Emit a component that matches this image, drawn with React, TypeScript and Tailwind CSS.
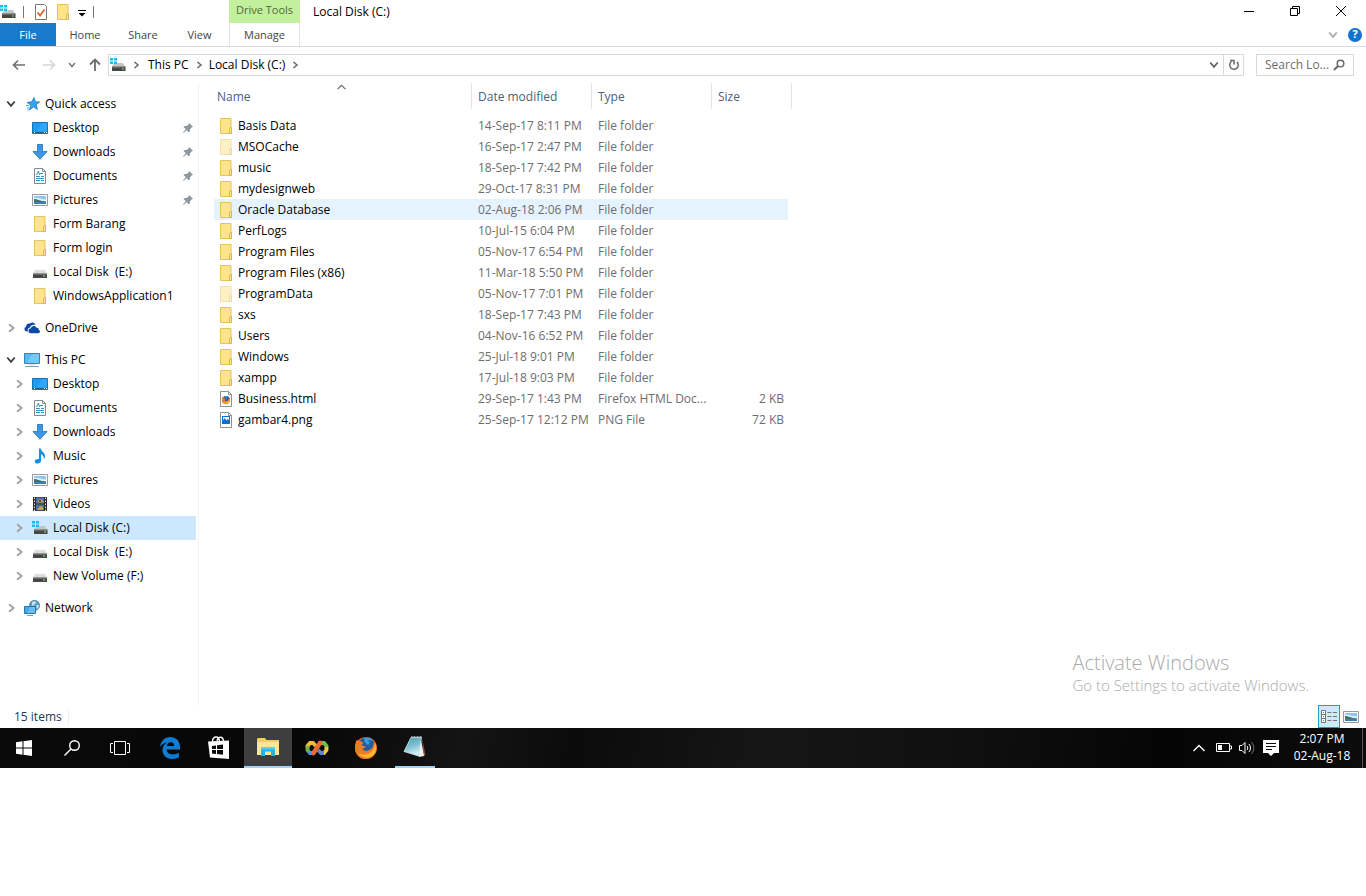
import type { ReactNode } from "react";

interface TreeItem {
  label: string;
  icon: ReactNode;
  nested?: boolean;
  pinned?: boolean;
  chevron?: "open" | "closed";
  selected?: boolean;
}

interface FileItem {
  name: string;
  date: string;
  type: string;
  size?: string;
  icon?: ReactNode;
  hovered?: boolean;
}

function FolderIcon({ faded = false }: { faded?: boolean }) {
  return (
    <svg width="16" height="16" viewBox="0 0 16 16" className={faded ? "opacity-50" : ""}>
      <path d="M2.500.5h10.500v15H2.500z" fill="#ffe48c" stroke="#e6c25a" />
      <path d="M11.500 15.500v-4.500l1-1.500h1v6z" fill="#ffe9a3" stroke="#d9b548" />
    </svg>
  );
}

function DriveIcon() {
  return (
    <svg width="16" height="16" viewBox="0 0 16 16">
      <path d="M3.500 6h9L15 9.500H1z" fill="#dcdcdc" />
      <path d="M1 9.500h14v4.500H1z" fill="#454745" />
      <path d="M1 9.500h14v1H1z" fill="#8d8f8d" />
      <path d="M11 11.500h2v1h-2z" fill="#6ff08a" />
    </svg>
  );
}

function SystemDriveIcon() {
  return (
    <svg width="16" height="16" viewBox="0 0 16 16">
      <path d="M4 6h9l2 3.500H2z" fill="#c4c6c6" />
      <path d="M2 9.500h13.500V14H2z" fill="#454745" />
      <path d="M2 9.500h13.500v1H2z" fill="#8d8f8d" />
      <path d="M12 11.500h2v1h-2z" fill="#6ff08a" />
      <path d="M0 1h3v2.500H0zM4 1h3v2.500H4zM0 4.500h3V7H0zM4 4.500h3V7H4z" fill="#1db9ea" />
    </svg>
  );
}

function DesktopIcon() {
  return (
    <svg width="16" height="16" viewBox="0 0 16 16">
      <path d="M.5 2.500h15v11H.5z" fill="#1f9df4" stroke="#1673b8" />
      <path d="M10 3h5v8L5 12z" fill="#4ab4fa" opacity=".4" />
      <path d="M1 12h14v1H1z" fill="#0d62a8" />
      <path d="M2 12h1v1H2zM12 12h1v1h-1zM14 12h1v1h-1z" fill="#fff" />
    </svg>
  );
}

function DownloadIcon() {
  return (
    <svg width="16" height="16" viewBox="0 0 16 16">
      <path d="M5.500.5h5v7h4.500L8 15.300 1 7.500h4.500z" fill="#3f95e0" stroke="#3380c8" />
    </svg>
  );
}

function DocumentIcon() {
  return (
    <svg width="16" height="16" viewBox="0 0 16 16">
      <path d="M2.500.5h8l3 3v12h-11z" fill="#fff" stroke="#85898c" />
      <path d="M10.500.5v3h3" fill="none" stroke="#85898c" />
      <path d="M4.500 7 6.500 3l1 4M8 5.500h3M4 8.500h4M9 8.500h3M4 10.500h8M4 12.500h4M9 12.500h3" fill="none" stroke="#2f94bd" />
    </svg>
  );
}

function PictureIcon() {
  return (
    <svg width="16" height="16" viewBox="0 0 16 16">
      <path d="M.5 2.500h15v11H.5z" fill="#fff" stroke="#979ba0" />
      <path d="M2 4h12v8H2z" fill="#8cc4f2" />
      <path d="M2 5.500c4 0 6 1.500 12 2v2H2z" fill="#dff0fa" />
      <path d="M2 7c3 0 6 2 12 2.500v1H2z" fill="#3f7562" />
      <path d="M2 10h12v2H2z" fill="#3a80b0" />
    </svg>
  );
}

function MusicIcon() {
  return (
    <svg width="16" height="16" viewBox="0 0 16 16">
      <path d="M7 .5h1.800c.3 3 4.200 4.200 4.200 7.500 0 1.500-.6 2.500-1.400 3.300.5-2.500-.4-4.100-2.600-5v6.500c0 1.700-1.500 2.700-3.400 2.700-1.700 0-2.900-.8-2.900-2.100 0-1.500 1.700-2.600 4.300-2.300z" fill="#0c93e4" />
    </svg>
  );
}

function VideoIcon() {
  return (
    <svg width="16" height="16" viewBox="0 0 16 16">
      <path d="M1 1h14v14H1z" fill="#2b2b2b" />
      <path d="M2.500 1.500v14M13.500 1.500v14" stroke="#e4e4e4" strokeDasharray="1.500 1.500" />
      <path d="M4 1.500h8v6H4zM4 8.500h8v6H4z" fill="#4670b6" />
      <path d="M5 6.500l2-3h3l2 3zM5 14l3-4 3 1v3z" fill="#c8a23a" />
      <path d="M7 4h2v2H7z" fill="#7c3b35" />
    </svg>
  );
}

function StarIcon() {
  return (
    <svg width="16" height="16" viewBox="0 0 16 16">
      <path d="M10 1.500l1.400 4.200 4.300.3-3.500 2.700 1.200 4.700-3.900-2.500-4 3 1.200-4.700L3 6.300l4.800-.5z" fill="#34a6ee" stroke="#1c7fc5" strokeWidth=".8" />
      <path d="M2 9.500h3M3 12h2.500M3.500 14h1.500" stroke="#4aaeee" />
    </svg>
  );
}

function OneDriveIcon() {
  return (
    <svg width="16" height="16" viewBox="0 0 16 16">
      <path d="M4 11.500H2.500A2.500 2.500 0 0 1 2 6.700C2.200 4 4 3 6 3.500c1.800-1.700 5-1 5.500 1.500-3-.8-5 .6-5.500 2.500-2 .3-2.800 2-2 4z" fill="#0c48a8" />
      <path d="M7 13.200a2.500 2.500 0 0 1 0-5c.3-2.500 4.500-3.200 5.500-.5 1.900 0 2.500 1.200 2.400 2.200 1.700.8 1.300 3.300-.6 3.300z" fill="#0c48a8" />
    </svg>
  );
}

function ComputerIcon() {
  return (
    <svg width="16" height="16" viewBox="0 0 16 16">
      <path d="M.5 1.500h15v10H.5z" fill="#58b9f0" stroke="#3c81ad" />
      <path d="M8 2h7v9H3z" fill="#8dd2f8" opacity=".6" />
      <path d="M5 12.500h6v1H5z" fill="#c7d3da" />
      <path d="M1 14.500h14" stroke="#8ea1ad" />
    </svg>
  );
}

function NetworkIcon() {
  return (
    <svg width="16" height="16" viewBox="0 0 16 16">
      <circle cx="10.500" cy="5.500" r="5" fill="#5f9fc4" stroke="#4683a8" />
      <path d="M8 2l3-1 1 2-2 2-2 1zM12.500 5l2.500 0-1 4-1.500-1z" fill="#c3e0ee" />
      <path d="M.5 6.500h11v7H.5z" fill="#3fa9ea" stroke="#2d76aa" />
      <path d="M6 7h5v6H3z" fill="#82ccf7" opacity=".6" />
      <path d="M3 15.500h6" stroke="#8299a8" />
    </svg>
  );
}

function FirefoxMark() {
  return (
    <>
      <circle cx="12" cy="12" r="11" fill="#e8661b" />
      <circle cx="12.500" cy="9.500" r="8.200" fill="#1d5fa6" />
      <path d="M10 2c4-1.500 8 0 9 3-2-1-4-1-5 0 2 1 2 3 0 4-2-1-4-3-4-7z" fill="#3f9bd9" />
      <path d="M2.500 4c.8.300 1.800.8 2.500 1.500C7 5 8 6 9.500 6.500L7.500 9c1 1 3 1 4.500 1.500-1 1.500-2.500 2-3.500 2.500 2 3 6 2 8.500 0 2-2 3-4 2.500-7.500 2 1.500 3 4 3 6.500 0 6-5 11-11 11C5 23 1 18 1 12c0-3 .5-5.500 1.500-8z" fill="#ef7c22" />
      <path d="M21 7c2.500 5 1 12-5 14-5 1.500-10-.5-12-4 5 3 12 2 15-3 1.500-2.500 2-4.500 2-7z" fill="#fbb935" />
    </>
  );
}

function HtmlFileIcon() {
  return (
    <svg width="16" height="16" viewBox="0 0 16 16">
      <path d="M2.500.5h8l3 3v12h-11z" fill="#fff" stroke="#8e9194" />
      <path d="M10.500.5v3h3" fill="none" stroke="#8e9194" />
      <svg x="3.500" y="4.500" width="9" height="9" viewBox="0 0 24 24">
        <FirefoxMark />
      </svg>
    </svg>
  );
}

function PngFileIcon() {
  return (
    <svg width="16" height="16" viewBox="0 0 16 16">
      <path d="M2.500.5h8l3 3v12h-11z" fill="#fff" stroke="#8e9194" />
      <path d="M10.500.5v3h3" fill="none" stroke="#8e9194" />
      <path d="M4 4h8v8H4z" fill="#0b71cf" />
      <path d="M5 5h6v3l-1.500-1L8.500 8.500 6.500 6 5 8.500z" fill="#fff" />
    </svg>
  );
}

function PinIcon() {
  return (
    <svg width="12" height="12" viewBox="0 0 12 12" className="ml-auto mr-[2px]">
      <path d="M7 1l4 3.800-1.200.5-1.800 1.900-.2 2.300-1 .8L4.700 8.200 1.500 11 1 10.500l2.900-3.200L1.500 5l1-1 2.300 0 1.800-1.800z" fill="#8c979f" />
    </svg>
  );
}

function Chevron({ dir, color = "#666", size = 8 }: { dir: "down" | "right" | "up"; color?: string; size?: number }) {
  const paths = {
    down: "M1 2l3 3.500L7 2",
    right: "M2.500 1L6 4 2.500 7",
    up: "M.5 5.500L4 2l3.500 3.500",
  };
  return (
    <svg width={size} height={size} viewBox="0 0 8 8" fill="none" stroke={color} strokeWidth={dir === "up" ? 1 : 1.5}>
      <path d={paths[dir]} />
    </svg>
  );
}

const groups: TreeItem[][] = [
  [
    { label: "Quick access", icon: <StarIcon />, chevron: "open" },
    { label: "Desktop", icon: <DesktopIcon />, nested: true, pinned: true },
    { label: "Downloads", icon: <DownloadIcon />, nested: true, pinned: true },
    { label: "Documents", icon: <DocumentIcon />, nested: true, pinned: true },
    { label: "Pictures", icon: <PictureIcon />, nested: true, pinned: true },
    { label: "Form Barang", icon: <FolderIcon />, nested: true },
    { label: "Form login", icon: <FolderIcon />, nested: true },
    { label: "Local Disk  (E:)", icon: <DriveIcon />, nested: true },
    { label: "WindowsApplication1", icon: <FolderIcon />, nested: true },
  ],
  [{ label: "OneDrive", icon: <OneDriveIcon />, chevron: "closed" }],
  [
    { label: "This PC", icon: <ComputerIcon />, chevron: "open" },
    { label: "Desktop", icon: <DesktopIcon />, nested: true, chevron: "closed" },
    { label: "Documents", icon: <DocumentIcon />, nested: true, chevron: "closed" },
    { label: "Downloads", icon: <DownloadIcon />, nested: true, chevron: "closed" },
    { label: "Music", icon: <MusicIcon />, nested: true, chevron: "closed" },
    { label: "Pictures", icon: <PictureIcon />, nested: true, chevron: "closed" },
    { label: "Videos", icon: <VideoIcon />, nested: true, chevron: "closed" },
    { label: "Local Disk (C:)", icon: <SystemDriveIcon />, nested: true, chevron: "closed", selected: true },
    { label: "Local Disk  (E:)", icon: <DriveIcon />, nested: true, chevron: "closed" },
    { label: "New Volume (F:)", icon: <DriveIcon />, nested: true, chevron: "closed" },
  ],
  [{ label: "Network", icon: <NetworkIcon />, chevron: "closed" }],
];

const files: FileItem[] = [
  { name: "Basis Data", date: "14-Sep-17 8:11 PM", type: "File folder" },
  { name: "MSOCache", date: "16-Sep-17 2:47 PM", type: "File folder", icon: <FolderIcon faded /> },
  { name: "music", date: "18-Sep-17 7:42 PM", type: "File folder" },
  { name: "mydesignweb", date: "29-Oct-17 8:31 PM", type: "File folder" },
  { name: "Oracle Database", date: "02-Aug-18 2:06 PM", type: "File folder", hovered: true },
  { name: "PerfLogs", date: "10-Jul-15 6:04 PM", type: "File folder" },
  { name: "Program Files", date: "05-Nov-17 6:54 PM", type: "File folder" },
  { name: "Program Files (x86)", date: "11-Mar-18 5:50 PM", type: "File folder" },
  { name: "ProgramData", date: "05-Nov-17 7:01 PM", type: "File folder", icon: <FolderIcon faded /> },
  { name: "sxs", date: "18-Sep-17 7:43 PM", type: "File folder" },
  { name: "Users", date: "04-Nov-16 6:52 PM", type: "File folder" },
  { name: "Windows", date: "25-Jul-18 9:01 PM", type: "File folder" },
  { name: "xampp", date: "17-Jul-18 9:03 PM", type: "File folder" },
  { name: "Business.html", date: "29-Sep-17 1:43 PM", type: "Firefox HTML Doc...", size: "2 KB", icon: <HtmlFileIcon /> },
  { name: "gambar4.png", date: "25-Sep-17 12:12 PM", type: "PNG File", size: "72 KB", icon: <PngFileIcon /> },
];

function TitleBar() {
  return (
    <header className="flex border-b border-[#dadbdc] text-[#444]">
      <div className="w-[229px]">
        <div className="flex h-[23px] items-center">
          <SystemDriveIcon />
          <span className="ml-[7px] h-3 w-px bg-[#777]" />
          <button className="ml-[9px]" aria-label="Properties">
            <svg width="16" height="16" viewBox="0 0 16 16" className="block">
              <path d="M2.500.5h9l2 2v13h-11z" fill="#fff" stroke="#77797c" />
              <path d="M4.500 8.500l2.500 3 4.500-6" fill="none" stroke="#e2622b" strokeWidth="1.800" />
            </svg>
          </button>
          <button className="ml-[6px]" aria-label="New folder">
            <FolderIcon />
          </button>
          <button className="ml-[7px]" aria-label="Customize toolbar">
            <svg width="8" height="8" viewBox="0 0 8 8" className="mt-[3px] block">
              <path d="M0 1.500h8" stroke="#000" />
              <path d="M.5 4h7L4 7.500z" />
            </svg>
          </button>
          <span className="ml-[7px] h-3 w-px bg-[#777]" />
        </div>
        <nav className="flex h-[23px] text-[11px]">
          <button className="w-14 bg-[#1979ca] pt-px text-white">File</button>
          <button className="w-[58px] pt-px">Home</button>
          <button className="w-[58px] pt-px">Share</button>
          <button className="w-[55px] pt-px">View</button>
        </nav>
      </div>
      <div className="w-[71px] text-[11px]">
        <div className="flex h-[23px] items-center justify-center bg-[#c2f09c] pb-[2px] text-[#4b6b3c]">Drive Tools</div>
        <button className="h-[23px] w-full border-x border-[#e4e4e4] pt-px">Manage</button>
      </div>
      <div className="flex-1">
        <div className="flex h-[23px] items-center pr-[2px] text-xs text-black">
          <h1 className="ml-[13px]">Local Disk (C:)</h1>
          <div className="ml-auto flex pb-[2px]">
            <button className="flex w-[46px] justify-center" aria-label="Minimize">
              <svg width="10" height="10" viewBox="0 0 10 10" stroke="#000">
                <path d="M0 5.500h10" />
              </svg>
            </button>
            <button className="flex w-[46px] justify-center" aria-label="Restore">
              <svg width="10" height="10" viewBox="0 0 10 10" stroke="#000" fill="none">
                <path d="M.5 2.500h7v7h-7zM2.500 2.500v-2h7v7h-2" />
              </svg>
            </button>
            <button className="flex w-[46px] justify-center" aria-label="Close">
              <svg width="10" height="10" viewBox="0 0 10 10" stroke="#000">
                <path d="M0 0l10 10M10 0L0 10" />
              </svg>
            </button>
          </div>
        </div>
        <div className="flex h-[23px] items-center justify-end gap-[10px] pr-1">
          <button aria-label="Minimize the ribbon">
            <Chevron dir="down" color="#aaa" size={10} />
          </button>
          <button className="flex size-[14px] items-center justify-center rounded-full bg-[#1073cf] text-[11px] font-bold text-white">
            ?
          </button>
        </div>
      </div>
    </header>
  );
}

function AddressBar() {
  return (
    <div className="flex h-9 items-center pr-3 pl-2">
      <button className="flex w-[22px] justify-center" aria-label="Back">
        <svg width="14" height="12" viewBox="0 0 14 12" fill="none" stroke="#6d6d6d" strokeWidth="1.600">
          <path d="M13 6H1.500M6 1.500L1.500 6 6 10.500" />
        </svg>
      </button>
      <button className="ml-2 flex w-[22px] justify-center" aria-label="Forward">
        <svg width="14" height="12" viewBox="0 0 14 12" fill="none" stroke="#d5d5d5" strokeWidth="1.600">
          <path d="M1 6h11.500M8 1.500L12.500 6 8 10.500" />
        </svg>
      </button>
      <button className="ml-1 flex w-4 justify-center" aria-label="Recent locations">
        <Chevron dir="down" color="#777" />
      </button>
      <button className="ml-1 flex w-[22px] justify-center" aria-label="Up">
        <svg width="12" height="14" viewBox="0 0 12 14" fill="none" stroke="#6d6d6d" strokeWidth="1.800">
          <path d="M6 13V1.500M1 6.500l5-5 5 5" />
        </svg>
      </button>
      <div className="ml-[2px] flex h-[22px] flex-1 items-center border border-[#d9d9d9] pl-px">
        <SystemDriveIcon />
        <span className="mx-[6px]">
          <Chevron dir="right" />
        </span>
        <a href="#this-pc" className="ml-[2px]">This PC</a>
        <span className="mx-[6px]">
          <Chevron dir="right" />
        </span>
        <a href="#local-disk-c">Local Disk (C:)</a>
        <span className="mx-[6px]">
          <Chevron dir="right" />
        </span>
        <button className="ml-auto mr-1" aria-label="Previous locations">
          <Chevron dir="down" size={10} />
        </button>
        <button className="flex h-full w-5 items-center justify-center border-l border-[#d9d9d9]" aria-label="Refresh">
          <svg width="12" height="12" viewBox="0 0 12 12" fill="none" stroke="#6a6a6a" strokeWidth="1.500">
            <path d="M9 2.900A4.300 4.300 0 1 1 3.500 2.500M2 1.500h4v4" />
          </svg>
        </button>
      </div>
      <label className="ml-3 flex h-[22px] w-[98px] items-center border border-[#d9d9d9] pr-2 pl-2">
        <input type="text" aria-label="Search Local Disk" placeholder="Search Lo..." className="w-[68px] outline-none placeholder:text-[#6d6d6d]" />
        <svg width="12" height="12" viewBox="0 0 12 12" fill="none" stroke="#6a6a6a">
          <circle cx="7.500" cy="4.500" r="3.300" strokeWidth="1.500" />
          <path d="M5 7L1 11" strokeWidth="2" />
        </svg>
      </label>
    </div>
  );
}

function TreeRow({ item }: { item: TreeItem }) {
  return (
    <li className={`flex h-6 items-center ${item.nested ? "pl-[11px]" : "pl-[3px]"} ${item.selected ? "bg-[#cce8ff]" : ""}`}>
      <span className="flex w-4 justify-center">
        {item.chevron && (
          <button aria-label={`Toggle ${item.label}`}>
            <Chevron
              dir={item.chevron === "open" ? "down" : "right"}
              color={item.chevron === "open" ? "#404040" : "#a0a0a0"}
              size={10}
            />
          </button>
        )}
      </span>
      <a href="#folder" className="ml-[5px] flex items-center gap-[5px] whitespace-pre">
        {item.icon}
        {item.label}
      </a>
      {item.pinned && <PinIcon />}
    </li>
  );
}

function Sidebar() {
  return (
    <aside className="flex w-[199px] shrink-0 flex-col gap-2 border-r border-[#f3f3f3] pt-[9px] pr-[2px]">
      {groups.map((group, i) => (
        <ul key={i}>
          {group.map((item) => (
            <TreeRow key={item.label} item={item} />
          ))}
        </ul>
      ))}
    </aside>
  );
}

function FileTable() {
  return (
    <table className="w-[574px] table-fixed text-left">
      <colgroup>
        <col className="w-[258px]" />
        <col className="w-[120px]" />
        <col className="w-[120px]" />
        <col className="w-[76px]" />
      </colgroup>
      <thead className="text-[#4c607a]">
        <tr className="h-8 align-top">
          <th className="p-0 font-normal">
            <div className="relative flex h-[26px] items-center border-r border-[#e5e5e5] pt-[2px] pl-[3px]">
              Name
              <span className="absolute top-0 left-[123px]">
                <Chevron dir="up" size={9} />
              </span>
            </div>
          </th>
          <th className="p-0 font-normal">
            <div className="flex h-[26px] items-center border-r border-[#e5e5e5] pt-[2px] pl-[6px]">Date modified</div>
          </th>
          <th className="p-0 font-normal">
            <div className="flex h-[26px] items-center border-r border-[#e5e5e5] pt-[2px] pl-[6px]">Type</div>
          </th>
          <th className="p-0 font-normal">
            <div className="flex h-[26px] w-20 items-center border-r border-[#e5e5e5] pt-[2px] pl-[6px]">Size</div>
          </th>
        </tr>
      </thead>
      <tbody className="text-[#6d6d6d]">
        {files.map((file) => (
          <tr key={file.name} className={`h-[21px] ${file.hovered ? "bg-[#e5f3ff]" : ""}`}>
            <td className="p-0 text-black">
              <div className="flex items-center gap-1 pl-1">
                {file.icon ?? <FolderIcon />}
                {file.name}
              </div>
            </td>
            <td className="p-0 pl-[6px] whitespace-nowrap">{file.date}</td>
            <td className="p-0 pl-[6px] whitespace-nowrap">{file.type}</td>
            <td className="p-0 pr-1 text-right">{file.size}</td>
          </tr>
        ))}
      </tbody>
    </table>
  );
}

function StatusBar() {
  return (
    <footer className="flex h-[23px] items-center pr-[7px] pl-[14px] text-[#1e395b]">
      <span className="border-r border-[#f0f0f0] pr-[6px]">15 items</span>
      <button className="ml-auto flex h-[23px] w-[22px] items-center justify-center border border-[#2a9bc6] bg-[#cdeaf7]" aria-label="Details view">
        <svg width="16" height="14" viewBox="0 0 16 14" fill="none" stroke="#777">
          <path d="M.5.5h4v12h-4zM.5 4.500h4M.5 8.500h4" fill="#fff" />
          <path d="M2 2.500h1M2 6.500h1M2 10.500h1M6.500 2.500h4M12 2.500h4M6.500 6.500h4M12 6.500h4M6.500 10.500h4M12 10.500h4" />
        </svg>
      </button>
      <button className="ml-[3px]" aria-label="Thumbnail view">
        <PictureIcon />
      </button>
    </footer>
  );
}

function Taskbar() {
  const slot = "flex h-10 w-12 items-center justify-center";
  return (
    <div className="flex h-10 items-center bg-[#0a0a0a] bg-[linear-gradient(100deg,#0a0a0a_0%,#070707_22%,#141414_34%,#0b0b0b_42%,#161616_56%,#101010_70%,#050505_85%,#0c0c0c_100%)] text-white">
      <button className={slot} aria-label="Start">
        <svg width="16" height="16" viewBox="0 0 16 16" fill="#fff">
          <path d="M0 2.200l6.500-.9v6.200H0zM7.500 1.200L16 0v7.500H7.500zM0 8.500h6.500v6.200L0 13.800zM7.500 8.500H16V16l-8.500-1.200z" />
        </svg>
      </button>
      <button className={slot} aria-label="Search">
        <svg width="16" height="16" viewBox="0 0 16 16" fill="none" stroke="#fff" strokeWidth="1.400">
          <circle cx="10.500" cy="5.500" r="4.800" />
          <path d="M7 9L.5 15.500" />
        </svg>
      </button>
      <button className={slot} aria-label="Task view">
        <svg width="20" height="14" viewBox="0 0 20 14" fill="none" stroke="#fff">
          <path d="M4.500.5h11v13h-11zM3 2.500H.5v9H3M17 2.500h2.500v9H17" />
        </svg>
      </button>
      <div className="ml-[2px] flex gap-px">
        <button className={slot} aria-label="Edge">
          <svg width="20" height="22" viewBox="0 0 20 22" fill="#0c7cd5">
            <path d="M0 9.800C.8 4 5 0 10.200 0 16.200 0 20 4.300 20 10v2.600H6.600c.2 3.400 3.200 4.800 6.200 4.800 2.300 0 4.300-.6 6.100-1.700v4.600c-2 1.100-4.300 1.700-6.900 1.700C6.500 22 2.500 18.500 2.500 13.300c0-3.400 1.700-6.300 4.900-7.800C4.300 5.700 1.500 7.400 0 9.800zM6.800 9h7.300c0-2.300-1.200-3.700-3.300-3.700S7.300 6.700 6.800 9z" />
          </svg>
        </button>
        <button className={slot} aria-label="Store">
          <svg width="22" height="24" viewBox="0 0 22 24">
            <path d="M4.500 6c0-6 6-7 7-1M9 5c1-5 6-5 6.500 0" fill="none" stroke="#fff" strokeWidth="1.400" />
            <path d="M0 5.500l21-1V23L2 21.500z" fill="#fff" />
            <path d="M4 10l4-.6V13H4zM9 9.200l6-.8V13H9zM4 14h4v4l-4-.5zM9 14h6v4.800L9 18z" fill="#0a0a0a" />
          </svg>
        </button>
        <button className={`${slot} border-b-2 border-[#9fd4f7] bg-[#3e3e3e]`} aria-label="File Explorer">
          <svg width="22" height="20" viewBox="0 0 22 20">
            <path d="M0 2l1-1h7l1.500 2H22v15H0z" fill="#f4cf65" />
            <path d="M0 5h22v13H0z" fill="#ffe594" />
            <path d="M4 10.500h14V19h-4v-4.500H8V19H4z" fill="#22b4e3" />
            <path d="M4 10.500h14v2H4z" fill="#53cdf0" />
          </svg>
        </button>
        <button className={slot} aria-label="Visual Studio">
          <svg width="24" height="16" viewBox="0 0 24 16" fill="none" strokeWidth="3.800">
            <path d="M2.500 8V6L5 3h3l3 3" stroke="#f0b93c" />
            <path d="M2.500 6v4L4 12" stroke="#6fb544" />
            <path d="M3.500 11.500L5 13h3" stroke="#4f8fe4" />
            <path d="M16 3h3l2.500 3v2" stroke="#6cc04a" />
            <path d="M21.500 7v3L19 13h-1" stroke="#f2c744" />
            <path d="M13 10l3 3h3" stroke="#5a86dc" />
            <path d="M7 13h1.500L15 3h2" stroke="#ea6a36" strokeWidth="4.500" />
          </svg>
        </button>
        <button className={slot} aria-label="Firefox">
          <svg width="24" height="24" viewBox="0 0 24 24">
            <FirefoxMark />
          </svg>
        </button>
        <button className={slot} aria-label="Notepad">
          <span className="flex h-10 w-10 items-center justify-center border-b-2 border-[#9fd4f7]">
            <svg width="24" height="22" viewBox="0 0 24 22">
              <defs>
                <linearGradient id="notepad-cover" x1="0" y1="0" x2="0.300" y2="1">
                  <stop offset="0" stopColor="#4f9fb4" />
                  <stop offset="0.550" stopColor="#7fc0d0" />
                  <stop offset="1" stopColor="#d5eff5" />
                </linearGradient>
              </defs>
              <path d="M19 2l3.500 17-2 1.500z" fill="#8b5535" />
              <path d="M17.500 1.500L21 20l-5.500 1z" fill="#eef3f5" />
              <path d="M8 1.500h10.500L15.500 20 1 15.500z" fill="url(#notepad-cover)" stroke="#cfe6ec" strokeWidth=".8" />
              <path d="M8 1h11" stroke="#b8c9ce" strokeWidth="1.500" strokeDasharray="1 .5" />
            </svg>
          </span>
        </button>
      </div>
      <div className="ml-auto flex h-10 items-center">
        <button aria-label="Show hidden icons">
          <svg width="12" height="8" viewBox="0 0 12 8" fill="none" stroke="#fff" strokeWidth="1.400">
            <path d="M.5 7L6 1.500 11.500 7" />
          </svg>
        </button>
        <svg width="16" height="10" viewBox="0 0 16 10" className="ml-[11px]">
          <path d="M.5.5h13v8H.5zM14 3h1.500v3H14" fill="none" stroke="#fff" />
          <path d="M2 2h4v5H2z" fill="#fff" />
        </svg>
        <svg width="16" height="14" viewBox="0 0 16 14" fill="none" stroke="#fff" className="ml-[7px]">
          <path d="M.5 4.500H3l3-3v11l-3-3H.5z" />
          <path d="M8 5c1 1.200 1 2.800 0 4M10 3c2 2.200 2 5.800 0 8" />
          <path d="M12.500 1c3 3.500 3 8.500 0 12" stroke="#777" />
        </svg>
        <button className="ml-2" aria-label="Notifications">
          <svg width="16" height="16" viewBox="0 0 16 16" className="block">
            <path d="M0 0h16v13h-5l-3 3-3-3H0z" fill="#fff" />
            <path d="M3 3.500h10M3 6.500h10M3 9.500h6" stroke="#0a0a0a" />
          </svg>
        </button>
        <time className="ml-[9px] w-[68px] pb-[2px] text-center leading-[17px]">
          2:07 PM
          <br />
          02-Aug-18
        </time>
        <button className="ml-[6px] h-10 w-1 border-l border-[#555]" aria-label="Show desktop" />
      </div>
    </div>
  );
}

function App() {
  return (
    <div className="bg-white font-['Open_Sans','Noto_Sans',sans-serif] text-xs text-black">
      <TitleBar />
      <AddressBar />
      <main className="relative flex min-h-[622px]">
        <Sidebar />
        <div className="flex-1 pl-[15px]">
          <FileTable />
        </div>
        <div className="absolute right-[57px] bottom-[10px] text-[#aaa]">
          <p className="text-xl leading-6 font-light">Activate Windows</p>
          <p className="text-[15px] leading-5 font-light">Go to Settings to activate Windows.</p>
        </div>
      </main>
      <StatusBar />
      <Taskbar />
    </div>
  );
}

export default App;
